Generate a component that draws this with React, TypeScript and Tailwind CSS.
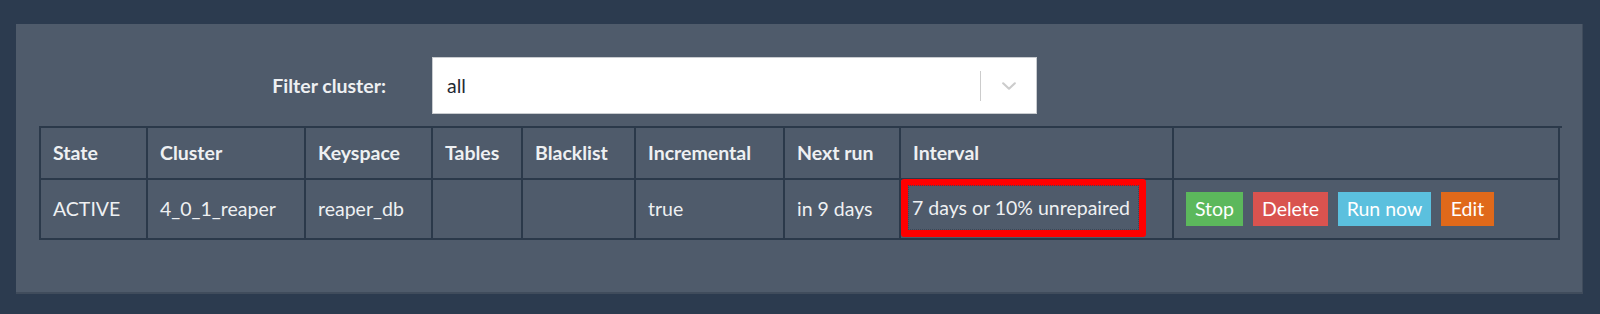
import React from "react";

const headers = ["State", "Cluster", "Keyspace", "Tables", "Blacklist", "Incremental", "Next run", "Interval", ""];

const cell = "border-r-2 border-b-2 border-[#2b394a] pl-[12px] flex items-center";

const App = () => {
  return (
    <div
      className="w-[1600px] h-[314px] bg-[#2c3b4f] pt-[24px] pl-[16px]"
      style={{ fontFamily: "Lato, 'Open Sans', sans-serif" }}
    >
      <div className="w-[1567px] h-[270px] bg-[#4f5b6b] border-b-2 border-r border-[#404c5c] pt-[33px] pl-[23px] text-[#eef0f2] text-[19.5px]">
        {/* filter */}
        <div className="flex items-center mb-[12px]">
          <div className="w-[347px] text-right font-bold">Filter cluster:</div>
          <div className="ml-[46px] w-[605px] h-[57px] bg-white border border-[#c9ccd0] flex items-center text-[#1f2933]">
            <span className="flex-1 pl-[14px]">all</span>
            <div className="w-px h-[30px] bg-[#cccccc]" />
            <div className="w-[55px] flex justify-center">
              <svg width="18" height="18" viewBox="0 0 20 20" fill="none" stroke="#cccccc" strokeWidth="2.4" strokeLinecap="round" strokeLinejoin="round">
                <path d="M3.5 7l6.5 6 6.5-6" />
              </svg>
            </div>
          </div>
        </div>

        {/* table */}
        <div className="w-[1523px] border-l-2 border-t-2 border-[#2b394a] grid grid-cols-[107px_158px_127px_90px_113px_149px_116px_273px_386px] grid-rows-[52px_60px]">
          {headers.map((h, i) => (
            <div key={i} className={`${cell} font-bold`}>
              {h}
            </div>
          ))}
          <div className={cell}>ACTIVE</div>
          <div className={cell}>4_0_1_reaper</div>
          <div className={cell}>reaper_db</div>
          <div className={cell}></div>
          <div className={cell}></div>
          <div className={cell}>true</div>
          <div className={cell}>in 9 days</div>
          <div className="border-r-2 border-b-2 border-[#2b394a] flex items-start">
            <div className="w-[245px] h-[58px] -mt-[1px] border-[7px] border-[#ff0000] rounded-[3px] flex">
              <div className="flex-1 flex items-center border border-dotted border-[#3a4757] pl-[3px] -mt-[1px]">
                7 days or 10% unrepaired
              </div>
            </div>
          </div>
          <div className={`${cell} gap-[10px] text-white`}>
            <span className="bg-[#5cb85c] w-[57px] h-[34px] flex items-center justify-center">Stop</span>
            <span className="bg-[#d9534f] w-[75px] h-[34px] flex items-center justify-center">Delete</span>
            <span className="bg-[#5bc0de] w-[93px] h-[34px] flex items-center justify-center">Run now</span>
            <span className="bg-[#e0691a] w-[53px] h-[34px] flex items-center justify-center">Edit</span>
          </div>
        </div>
      </div>
    </div>
  );
};

export default App;
